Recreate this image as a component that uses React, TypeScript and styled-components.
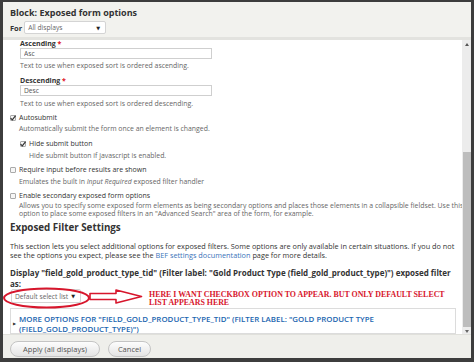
import styled, { createGlobalStyle } from "styled-components";

const GlobalStyle = createGlobalStyle`
  html, body { margin: 0; padding: 0; }
  body {
    background: #3d3d3d;
    font-family: "Open Sans", "DejaVu Sans", sans-serif;
    color: #333;
  }
`;

const Frame = styled.div`
  width: 474px;
  height: 362px;
  box-sizing: border-box;
  padding: 2px 3px 4px 3px;
  background: #3d3d3d;
`;

const Dialog = styled.div`
  height: 100%;
  display: flex;
  flex-direction: column;
  background: #fff;
`;

/* ---------- header ---------- */

const Header = styled.div`
  background: #f2f2ee;
  padding: 6px 7px 3px;
  border-bottom: 3px solid #e3e3df;
`;

const Title = styled.h1`
  margin: 0;
  font-size: 9px;
  line-height: 10px;
  font-weight: 700;
  color: #333;
`;

const ForRow = styled.div`
  display: flex;
  align-items: center;
  gap: 2px;
  margin-top: 3px;
`;

const ForLabel = styled.span`
  font-size: 7.5px;
  font-weight: 700;
  color: #333;
`;

const SelectBox = styled.div<{ $w: number; $h: number }>`
  flex: none;
  width: ${(p) => p.$w}px;
  height: ${(p) => p.$h}px;
  box-sizing: border-box;
  border: 1px solid #d4d4d4;
  border-radius: 2px;
  background: #fff;
  display: flex;
  align-items: center;
  justify-content: space-between;
  padding: 0 5px 0 3px;
  font-size: 6.7px;
  color: #666;
  white-space: nowrap;
`;

const Caret = styled.span`
  font-size: 5px;
  color: #222;
`;

/* ---------- body ---------- */

const Body = styled.div`
  flex: 1;
  display: flex;
  min-height: 0;
`;

const Content = styled.div`
  flex: 1;
  overflow: hidden;
  position: relative;
  padding: 0 6px 0 7px;
`;

const Indented = styled.div`
  padding-left: 10px;
`;

const FieldLabel = styled.div<{ $mt?: number }>`
  margin-top: ${(p) => p.$mt ?? 0}px;
  font-size: 7px;
  line-height: 7px;
  font-weight: 700;
  color: #333;
`;

const Req = styled.span`
  color: #e0101a;
`;

const TextInput = styled.input`
  display: block;
  width: 192px;
  height: 11px;
  box-sizing: border-box;
  margin: 1px 0 0;
  padding: 0 3px;
  border: 1px solid #cfcfcf;
  font-family: inherit;
  font-size: 6.7px;
  color: #555;
  background: #fff;
  outline: none;
`;

const Help = styled.div<{ $mt?: number; $indent?: number }>`
  margin-top: ${(p) => p.$mt ?? 3}px;
  padding-left: ${(p) => p.$indent ?? 0}px;
  font-size: 6.9px;
  line-height: 8px;
  color: #666;
  white-space: nowrap;
`;

const CheckRow = styled.div<{ $mt: number; $indent?: number }>`
  display: flex;
  align-items: center;
  gap: 3px;
  margin-top: ${(p) => p.$mt}px;
  padding-left: ${(p) => p.$indent ?? 0}px;
  font-size: 7px;
  line-height: 8px;
  color: #333;
`;

const Box = styled.span`
  width: 6px;
  height: 6px;
  box-sizing: border-box;
  border: 1px solid #aaa;
  border-radius: 1px;
  background: #f6f6f6;
  display: flex;
  align-items: center;
  justify-content: center;
`;

function Check({ checked }: { checked?: boolean }) {
  return (
    <Box>
      {checked && (
        <svg width="6" height="6" viewBox="0 0 6 6" style={{ overflow: "visible" }}>
          <path d="M0.6 3.2 L2.3 4.9 L5.6 0.6" fill="none" stroke="#333" strokeWidth="1.2" />
        </svg>
      )}
    </Box>
  );
}

const SectionTitle = styled.h2`
  margin: 5px 0 0;
  font-size: 9.8px;
  line-height: 10px;
  font-weight: 700;
  color: #333;
`;

const Para = styled.p`
  margin: 9px 0 0;
  font-size: 7.3px;
  line-height: 9px;
  color: #333;
  white-space: nowrap;
`;

const Link = styled.a`
  color: #3b73b9;
  text-decoration: none;
`;

const BoldPara = styled.p`
  margin: 7px 0 0;
  font-size: 8px;
  line-height: 11px;
  font-weight: 700;
  color: #333;
  white-space: nowrap;
`;

const WidgetRow = styled.div`
  position: relative;
  display: flex;
  align-items: flex-start;
  padding-left: 1px;
`;

const Annotation = styled.svg`
  position: absolute;
  left: -8px;
  top: -2px;
  pointer-events: none;
`;

const ArrowMark = styled.svg`
  margin-left: 8px;
  flex: none;
`;

const RedNote = styled.div`
  flex: none;
  margin: 2px 0 0 6px;
  font-family: "Liberation Serif", "Times New Roman", serif;
  font-weight: 700;
  font-size: 7.9px;
  line-height: 8px;
  color: #d7162c;
  white-space: nowrap;
`;

const Fieldset = styled.div`
  margin-top: 1px;
  height: 26px;
  box-sizing: border-box;
  border: 1px solid #dcdcdc;
  display: flex;
  align-items: flex-start;
  gap: 3px;
  padding: 5px 0 0 2px;
`;

const Marker = styled.span`
  margin-top: 7px;
  font-size: 4px;
  line-height: 5px;
  color: #333;
`;

const Legend = styled.div`
  font-size: 7.9px;
  line-height: 10px;
  font-weight: 600;
  color: #1c66b0;
  white-space: nowrap;
`;

/* ---------- scrollbar ---------- */

const Scrollbar = styled.div`
  width: 9px;
  background: #ececec;
  display: flex;
  flex-direction: column;
  align-items: center;
`;

const ScrollArrow = styled.span<{ $down?: boolean }>`
  margin-top: 3px;
  width: 0;
  height: 0;
  border-left: 2.5px solid transparent;
  border-right: 2.5px solid transparent;
  ${(p) => (p.$down ? "border-top: 3px solid #666;" : "border-bottom: 3px solid #555;")}
`;

const Thumb = styled.div`
  margin-top: 106px;
  width: 8px;
  height: 175px;
  background: #bdbdbd;
`;

/* ---------- footer ---------- */

const Footer = styled.div`
  height: 24px;
  box-sizing: border-box;
  padding: 6px 7px 0;
  background: #efefeb;
  border-top: 1px solid #e0e0db;
  display: flex;
  gap: 8px;
`;

const Button = styled.button<{ $w: number }>`
  width: ${(p) => p.$w}px;
  height: 16px;
  padding: 0;
  border: 1px solid #c4c4c4;
  border-radius: 9px;
  background: linear-gradient(#fdfdfd, #e4e4e4);
  font-family: inherit;
  font-size: 7.5px;
  color: #555;
`;

export default function App() {
  return (
    <>
      <GlobalStyle />
      <Frame>
        <Dialog>
          <Header>
            <Title>Block: Exposed form options</Title>
            <ForRow>
              <ForLabel>For</ForLabel>
              <SelectBox $w={82} $h={13}>
                <span>All displays</span>
                <Caret>▼</Caret>
              </SelectBox>
            </ForRow>
          </Header>

          <Body>
            <Content>
              <Indented>
                <FieldLabel>
                  Ascending <Req>*</Req>
                </FieldLabel>
                <TextInput readOnly value="Asc" />
                <Help>Text to use when exposed sort is ordered ascending.</Help>
                <FieldLabel $mt={7}>
                  Descending <Req>*</Req>
                </FieldLabel>
                <TextInput readOnly value="Desc" />
                <Help $mt={4}>Text to use when exposed sort is ordered descending.</Help>
              </Indented>

              <CheckRow $mt={6}>
                <Check checked />
                <span>Autosubmit</span>
              </CheckRow>
              <Help $indent={9}>Automatically submit the form once an element is changed.</Help>

              <CheckRow $mt={7} $indent={10}>
                <Check checked />
                <span>Hide submit button</span>
              </CheckRow>
              <Help $mt={4} $indent={19}>Hide submit button if javascript is enabled.</Help>

              <CheckRow $mt={6}>
                <Check />
                <span>Require input before results are shown</span>
              </CheckRow>
              <Help $mt={4} $indent={9}>
                Emulates the built in <i>Input Required</i> exposed filter handler
              </Help>

              <CheckRow $mt={6}>
                <Check />
                <span>Enable secondary exposed form options</span>
              </CheckRow>
              <Help $mt={2} $indent={9}>
                Allows you to specify some exposed form elements as being secondary options and places those elements in a collapsible fieldset. Use this
                <br />
                option to place some exposed filters in an "Advanced Search" area of the form, for example.
              </Help>

              <SectionTitle>Exposed Filter Settings</SectionTitle>
              <Para>
                This section lets you select additional options for exposed filters. Some options are only available in certain situations. If you do not
                <br />
                see the options you expect, please see the <Link>BEF settings documentation</Link> page for more details.
              </Para>

              <BoldPara>
                Display "field_gold_product_type_tid" (Filter label: "Gold Product Type (field_gold_product_type)") exposed filter
                <br />
                as:
              </BoldPara>

              <WidgetRow>
                <SelectBox $w={70} $h={14}>
                  <span>Default select list</span>
                  <Caret>▼</Caret>
                </SelectBox>
                <ArrowMark width="54" height="15" viewBox="0 0 54 15">
                  <path
                    d="M1 4.5 H27 V1 L52.5 7.5 L27 14 V10.5 H1 Z"
                    fill="#fff"
                    stroke="#d7162c"
                    strokeWidth="1.6"
                    strokeLinejoin="round"
                  />
                </ArrowMark>
                <RedNote>
                  HERE I WANT CHECKBOX OPTION TO APPEAR. BUT ONLY DEFAULT SELECT
                  <br />
                  LIST APPEARS HERE
                </RedNote>
                <Annotation width="90" height="23" viewBox="0 0 90 23">
                  <ellipse cx="44.5" cy="11" rx="42.5" ry="9.5" fill="none" stroke="#d7162c" strokeWidth="2" />
                </Annotation>
              </WidgetRow>

              <Fieldset>
                <Marker>▶</Marker>
                <Legend>
                  MORE OPTIONS FOR "FIELD_GOLD_PRODUCT_TYPE_TID" (FILTER LABEL: "GOLD PRODUCT TYPE
                  <br />
                  (FIELD_GOLD_PRODUCT_TYPE)")
                </Legend>
              </Fieldset>
            </Content>

            <Scrollbar>
              <ScrollArrow />
              <Thumb />
              <ScrollArrow $down />
            </Scrollbar>
          </Body>

          <Footer>
            <Button $w={90}>Apply (all displays)</Button>
            <Button $w={43}>Cancel</Button>
          </Footer>
        </Dialog>
      </Frame>
    </>
  );
}
